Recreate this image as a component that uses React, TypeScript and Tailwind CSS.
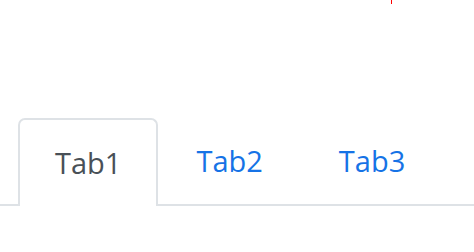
const tabs = ["Tab1", "Tab2", "Tab3"];

export default function App() {
  const active = 0;

  return (
    <div className="relative h-[252px] w-[474px] overflow-hidden bg-white font-['Open_Sans',sans-serif]">
      <span className="absolute left-[391px] top-0 h-[4px] w-px bg-[#ff0000]" />
      <div className="pt-[118px]">
        <ul className="flex border-b-2 border-[#dee2e6] pl-[18px]">
          {tabs.map((tab, index) =>
            index === active ? (
              <li
                key={tab}
                className="-mb-[2px] flex h-[88px] items-center rounded-t-[7px] border-2 border-b-0 border-[#dee2e6] bg-white px-[35px] text-[29px] text-[#495057]"
              >
                {tab}
              </li>
            ) : (
              <li
                key={tab}
                className="flex h-[86px] items-center px-[38px] text-[29px] text-[#1673e6]"
              >
                {tab}
              </li>
            ),
          )}
        </ul>
      </div>
    </div>
  );
}
